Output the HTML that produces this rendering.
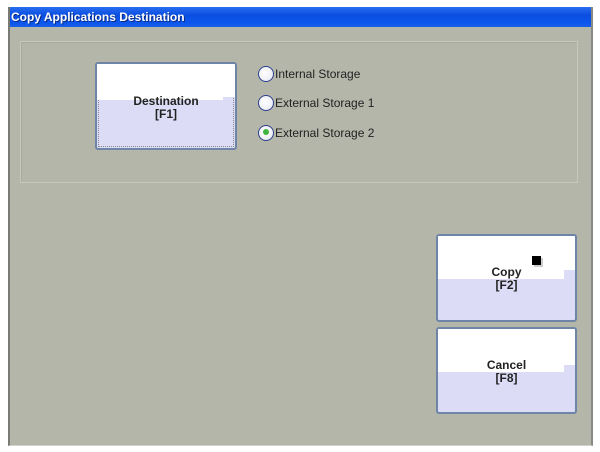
<!DOCTYPE html>
<html><head><style>
*{margin:0;padding:0;box-sizing:border-box}
body{width:600px;height:452px;background:#fff;position:relative;overflow:hidden;font-family:"Liberation Sans","DejaVu Sans",sans-serif}
.win{position:absolute;left:8px;top:7px;width:585px;height:439px;background:#b5b6aa;border-left:2px solid #7a7a74;border-right:2px solid #8a8a84;border-bottom:1px solid #d0d0d0}
.title{position:absolute;left:0;top:0;right:0;height:20px;background:linear-gradient(#2a6ef0,#0a4ee0 40%,#0d56ee 80%,#1a5fe8);color:#fff;font-size:12px;font-weight:bold;line-height:20px;padding-left:1px;text-shadow:1px 1px 0 #0a2a80}
.grp{position:absolute;left:10px;top:34px;width:558px;height:142px;border:1px solid #c8c9bd;box-shadow:inset 1px 1px 0 #a9aa9e}
.btn{position:absolute;border:2px solid #6f85a8;border-radius:3px;background:#dcdcf6;overflow:hidden;font-size:12px;font-weight:bold;text-align:center;color:#222}
.btn .w{position:absolute;left:0;top:0;right:0;background:#fff}
.btn .w2{position:absolute;background:#fff}
.btn .t{position:absolute;left:0;right:0;line-height:13px}
.rad{position:absolute;left:258px;font-size:12px;color:#222;line-height:16px}
.rad i{display:inline-block;width:16px;height:16px;border-radius:50%;border:1.5px solid #2c3f8c;background:radial-gradient(circle at 40% 40%,#fff,#e4e6ef);vertical-align:middle;margin-right:1px;position:relative;top:-1px}
.rad i.on::after{content:"";position:absolute;left:3.5px;top:3.5px;width:6px;height:6px;border-radius:50%;background:#3fb53f}
</style></head><body>
<div class="win">
<div class="title">Copy Applications Destination</div>
<div class="grp"></div>
</div>
<div class="btn" style="left:95px;top:62px;width:142px;height:88px;outline:1px dotted #888;outline-offset:-4px">
<div class="w" style="height:33px"></div><div class="w2" style="left:0;top:0;width:126px;height:36px"></div>
<div class="t" style="top:31px">Destination<br>[F1]</div></div>
<div class="rad" style="top:66px"><i></i>Internal Storage</div>
<div class="rad" style="top:95px"><i></i>External Storage 1</div>
<div class="rad" style="top:125px"><i class="on"></i>External Storage 2</div>
<div class="btn" style="left:436px;top:234px;width:141px;height:88px">
<div class="w" style="height:34px"></div><div class="w2" style="left:0;top:0;width:126px;height:43px"></div>
<div class="t" style="top:30px">Copy<br>[F2]</div>
<div style="position:absolute;left:94px;top:20px;width:9px;height:9px;background:#000;box-shadow:2px 2px 0 #ccc"></div></div>
<div class="btn" style="left:436px;top:327px;width:141px;height:87px">
<div class="w" style="height:36px"></div><div class="w2" style="left:0;top:0;width:126px;height:43px"></div>
<div class="t" style="top:30px">Cancel<br>[F8]</div></div>
</body></html>
